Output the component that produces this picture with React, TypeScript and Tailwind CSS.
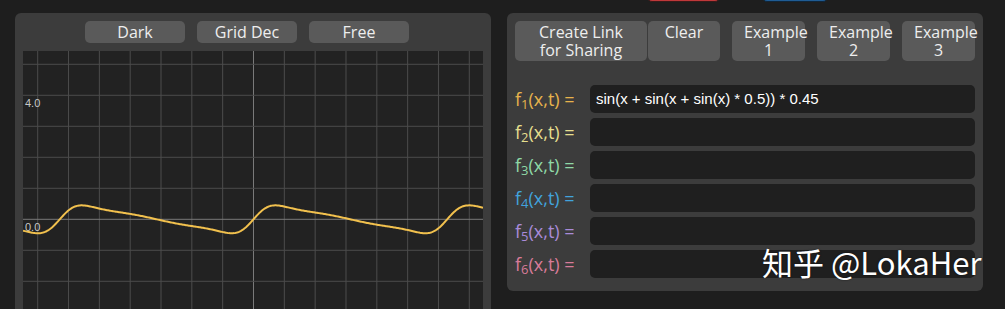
import React from 'react';

const UNIT_X = 30.83;
const UNIT_Y = 31;
const ORIGIN_X = 230.5;
const ORIGIN_Y = 168.3;
const CANVAS_W = 460;
const CANVAS_H = 270;

function f1(x: number) {
  return Math.sin(x + Math.sin(x + Math.sin(x) * 0.5)) * 0.45;
}

function curvePath() {
  const pts: string[] = [];
  for (let px = 0; px <= CANVAS_W; px += 1) {
    const u = (px - ORIGIN_X) / UNIT_X;
    const py = ORIGIN_Y - f1(u) * UNIT_Y;
    pts.push(`${px === 0 ? 'M' : 'L'}${px.toFixed(1)},${py.toFixed(2)}`);
  }
  return pts.join(' ');
}

function Graph() {
  const vLines: number[] = [];
  for (let k = -8; k <= 8; k++) {
    const x = ORIGIN_X + k * UNIT_X;
    if (x > 0 && x < CANVAS_W) vLines.push(x);
  }
  const hLines: number[] = [];
  for (let k = -6; k <= 6; k++) {
    const y = ORIGIN_Y + k * UNIT_Y;
    if (y > 0 && y < CANVAS_H) hLines.push(y);
  }

  return (
    <svg width={CANVAS_W} height={CANVAS_H} className="block bg-[#222222]">
      {vLines.map((x) => (
        <line key={'v' + x} x1={x} x2={x} y1={0} y2={CANVAS_H} stroke={Math.abs(x - ORIGIN_X) < 1 ? '#7a7a7a' : '#4c4c4c'} strokeWidth={1} />
      ))}
      {hLines.map((y) => (
        <line key={'h' + y} x1={0} x2={CANVAS_W} y1={y} y2={y} stroke={Math.abs(y - ORIGIN_Y) < 1 ? '#7a7a7a' : '#4c4c4c'} strokeWidth={1} />
      ))}
      <text x={2} y={ORIGIN_Y - 4 * UNIT_Y + 12} fill="#c8c8c8" fontSize={11} fontFamily="Liberation Sans, Arial, sans-serif">
        4.0
      </text>
      <text x={2} y={ORIGIN_Y + 12} fill="#c8c8c8" fontSize={11} fontFamily="Liberation Sans, Arial, sans-serif">
        0.0
      </text>
      <path d={curvePath()} fill="none" stroke="#f2c14e" strokeWidth={2} strokeLinejoin="round" />
    </svg>
  );
}

const fns = [
  { n: 1, color: 'text-[#e7b34c]', value: 'sin(x + sin(x + sin(x) * 0.5)) * 0.45' },
  { n: 2, color: 'text-[#e6df8e]', value: '' },
  { n: 3, color: 'text-[#8fd8a6]', value: '' },
  { n: 4, color: 'text-[#42a3dc]', value: '' },
  { n: 5, color: 'text-[#a98bd9]', value: '' },
  { n: 6, color: 'text-[#d87b99]', value: '' },
];

const btn = 'rounded-[5px] bg-[#5a5a5a] text-[#eeeeee] text-[16px] leading-[18px] py-[2px] text-center';

export default function App() {
  return (
    <div className="relative h-[309px] w-[1005px] overflow-hidden bg-[#1e1e1e] font-['Open_Sans',sans-serif]">
      {/* bottoms of the buttons above the fold */}
      <div className="flex h-[3px]">
        <div className="ml-[647px] mt-[-27px] h-[29px] w-[73px] rounded-[5px] border border-[#3a1a1a] bg-[#c0383a]" />
        <div className="ml-[42px] mt-[-27px] h-[29px] w-[66px] rounded-[5px] border border-[#10263a] bg-[#1f5c94]" />
      </div>

      <div className="mt-[10px] flex items-start pl-[15px]">
        {/* left: graph */}
        <div className="flex h-[320px] w-[476px] flex-col rounded-[6px] bg-[#3c3c3c] px-[8px] pt-[8px]">
          <div className="flex gap-[12px] pl-[62px]">
            <div className={btn + ' w-[100px]'}>Dark</div>
            <div className={btn + ' w-[100px]'}>Grid Dec</div>
            <div className={btn + ' w-[100px]'}>Free</div>
          </div>
          <div className="mt-[8px]">
            <Graph />
          </div>
        </div>

        {/* right: functions */}
        <div className="ml-[16px] w-[476px] rounded-[6px] bg-[#3c3c3c] px-[8px] pb-[13px] pt-[8px]">
          <div className="flex">
            <div className="flex h-[40px] w-[132px] flex-col items-center rounded-[5px] bg-[#5a5a5a] pt-[2px] text-[16px] leading-[18px] text-[#eeeeee]">
              <span>Create Link</span>
              <span>for Sharing</span>
            </div>
            <div className={btn + ' ml-[1px] h-[40px] w-[72px]'}>Clear</div>
            <div className={btn + ' ml-[12px] h-[40px] w-[73px] px-[12px]'}>Example 1</div>
            <div className={btn + ' ml-[12px] h-[40px] w-[73px] px-[12px]'}>Example 2</div>
            <div className={btn + ' ml-[12px] h-[40px] w-[73px] px-[12px]'}>Example 3</div>
          </div>

          <div className="mt-[24px] flex flex-col gap-[5px]">
            {fns.map((fn) => (
              <div key={fn.n} className="flex h-[28px] items-center">
                <div className={'w-[75px] whitespace-nowrap text-[18px] leading-[20px] ' + fn.color}>
                  f<sub className="text-[13px]">{fn.n}</sub>(x,t) =
                </div>
                <div className="flex h-[28px] flex-1 items-center rounded-[5px] bg-[#1f1f1f] pl-[6px] font-['Liberation_Sans',Arial,sans-serif] text-[15px] text-white">
                  {fn.value}
                </div>
              </div>
            ))}
          </div>
        </div>
      </div>

      {/* watermark */}
      <div className="absolute left-[762px] top-[242px] whitespace-nowrap font-['Noto_Sans_CJK_SC','Noto_Sans',sans-serif] text-[31px] leading-[40px] text-white [text-shadow:0_0_2px_rgba(0,0,0,0.6)]">
        知乎 @LokaHer
      </div>
    </div>
  );
}
